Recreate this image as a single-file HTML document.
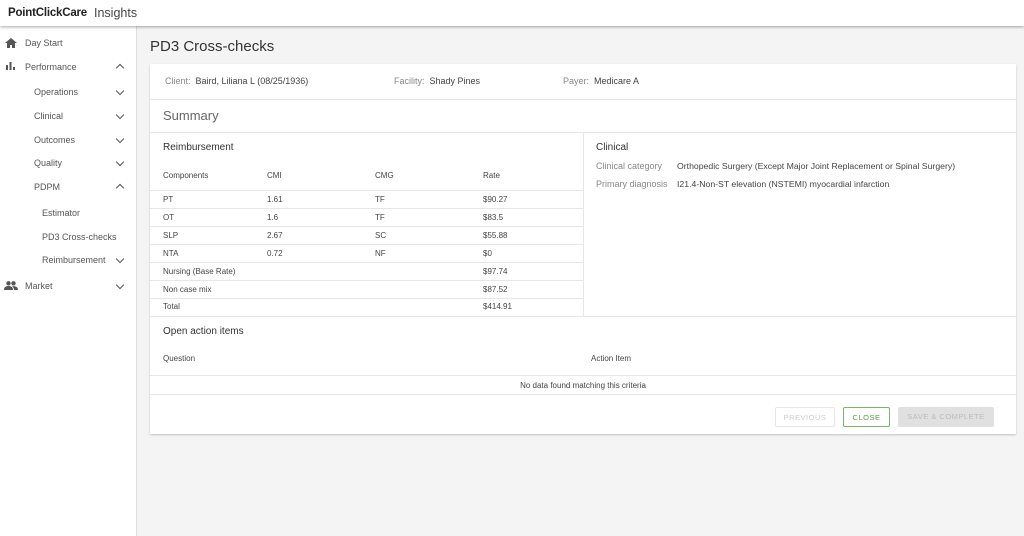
<!DOCTYPE html>
<html><head><meta charset="utf-8"><style>
*{box-sizing:border-box;margin:0;padding:0}
body{width:1024px;height:536px;overflow:hidden;background:#f4f4f4;font-family:"Liberation Sans",sans-serif;color:#333;position:relative}
.hdr{position:absolute;left:0;top:0;width:1024px;height:26px;background:#fff;box-shadow:0 1px 3px rgba(0,0,0,.35);z-index:2}
.hdr b{position:absolute;left:8px;top:7px;font-size:11.5px;color:#222;letter-spacing:-.2px}
.hdr span{position:absolute;left:94px;top:6px;font-size:12.5px;color:#444}
.side{position:absolute;left:0;top:26px;width:137px;height:510px;background:#fff;border-right:1px solid #ddd}
.it{position:absolute;font-size:9px;color:#555}
.ch{position:absolute;left:117px;width:6px;height:6px;border-right:1.4px solid #555;border-bottom:1.4px solid #555;transform:rotate(45deg)}
.up{transform:rotate(-135deg)}
.t{position:absolute;font-size:9px;color:#444}
.card{position:absolute;left:150px;top:64px;width:866px;height:370px;background:#fff;box-shadow:0 1px 2px rgba(0,0,0,.2)}
.hl{position:absolute;left:0;height:1px;background:#e6e6e6}
.g{color:#888}
.btn{position:absolute;top:343px;height:20px;font-size:7.5px;letter-spacing:.5px;text-align:center;line-height:19px;border-radius:2px}
</style></head><body>
<div class="hdr"><b>PointClickCare</b><span>Insights</span></div>
<div class="side">
<svg style="position:absolute;left:5px;top:12px" width="12" height="10" viewBox="0 0 12 10"><path d="M6 0L0 5h2v5h3V7h2v3h3V5h2z" fill="#555"/></svg>
<div class="it" style="left:25px;top:12px">Day Start</div>
<svg style="position:absolute;left:6px;top:36px" width="9" height="8"><rect x="0" y="3" width="2" height="5" fill="#555"/><rect x="3.5" y="0" width="2" height="8" fill="#555"/><rect x="7" y="5" width="2" height="3" fill="#555"/></svg>
<div class="it" style="left:25px;top:36px">Performance</div><div class="ch up" style="top:39px"></div>
<div class="it" style="left:34px;top:61px">Operations</div><div class="ch" style="top:62px"></div>
<div class="it" style="left:34px;top:85px">Clinical</div><div class="ch" style="top:86px"></div>
<div class="it" style="left:34px;top:109px">Outcomes</div><div class="ch" style="top:110px"></div>
<div class="it" style="left:34px;top:132px">Quality</div><div class="ch" style="top:133px"></div>
<div class="it" style="left:34px;top:156px">PDPM</div><div class="ch up" style="top:159px"></div>
<div class="it" style="left:42px;top:182px">Estimator</div>
<div class="it" style="left:42px;top:206px">PD3 Cross-checks</div>
<div class="it" style="left:42px;top:229px">Reimbursement</div><div class="ch" style="top:230px"></div>
<svg style="position:absolute;left:4px;top:255px" width="14" height="9" viewBox="0 0 14 9"><circle cx="4.5" cy="2.3" r="2.2" fill="#555"/><circle cx="9.5" cy="2.3" r="2.2" fill="#555"/><path d="M0 9c0-3 2-4 4.5-4S9 6 9 9zM8 5.3c3-.5 6 .5 6 3.7h-4c0-1.5-.7-2.8-2-3.7z" fill="#555"/></svg>
<div class="it" style="left:25px;top:255px">Market</div><div class="ch" style="top:256px"></div>
</div>
<div style="position:absolute;left:150px;top:38px;font-size:15px;color:#333">PD3 Cross-checks</div>
<div class="card">
<div class="t" style="left:15px;top:12px"><span class="g">Client:</span>&nbsp; Baird, Liliana L (08/25/1936)</div>
<div class="t" style="left:244px;top:12px"><span class="g">Facility:</span>&nbsp; Shady Pines</div>
<div class="t" style="left:413px;top:12px"><span class="g">Payer:</span>&nbsp; Medicare A</div>
<div class="hl" style="top:35px;width:866px"></div>
<div style="position:absolute;left:13px;top:44px;font-size:13px;color:#666">Summary</div>
<div class="hl" style="top:68px;width:866px"></div>
<div style="position:absolute;left:433px;top:69px;width:1px;height:183px;background:#e6e6e6"></div>
<div class="t" style="left:13px;top:78px;font-size:10px;color:#333">Reimbursement</div>
<div class="t" style="left:13px;top:107px;font-size:8px">Components</div><div class="t" style="left:117px;top:107px;font-size:8px">CMI</div><div class="t" style="left:225px;top:107px;font-size:8px">CMG</div><div class="t" style="left:333px;top:107px;font-size:8px">Rate</div>
<div class="hl" style="top:126px;width:433px"></div>
<div class="t" style="left:13px;top:131px;font-size:8px">PT</div><div class="t" style="left:117px;top:131px;font-size:8px">1.61</div><div class="t" style="left:225px;top:131px;font-size:8px">TF</div><div class="t" style="left:333px;top:131px;font-size:8px">$90.27</div>
<div class="hl" style="top:144px;width:433px"></div>
<div class="t" style="left:13px;top:149px;font-size:8px">OT</div><div class="t" style="left:117px;top:149px;font-size:8px">1.6</div><div class="t" style="left:225px;top:149px;font-size:8px">TF</div><div class="t" style="left:333px;top:149px;font-size:8px">$83.5</div>
<div class="hl" style="top:162px;width:433px"></div>
<div class="t" style="left:13px;top:167px;font-size:8px">SLP</div><div class="t" style="left:117px;top:167px;font-size:8px">2.67</div><div class="t" style="left:225px;top:167px;font-size:8px">SC</div><div class="t" style="left:333px;top:167px;font-size:8px">$55.88</div>
<div class="hl" style="top:180px;width:433px"></div>
<div class="t" style="left:13px;top:185px;font-size:8px">NTA</div><div class="t" style="left:117px;top:185px;font-size:8px">0.72</div><div class="t" style="left:225px;top:185px;font-size:8px">NF</div><div class="t" style="left:333px;top:185px;font-size:8px">$0</div>
<div class="hl" style="top:198px;width:433px"></div>
<div class="t" style="left:13px;top:203px;font-size:8px">Nursing (Base Rate)</div><div class="t" style="left:333px;top:203px;font-size:8px">$97.74</div>
<div class="hl" style="top:216px;width:433px"></div>
<div class="t" style="left:13px;top:221px;font-size:8px">Non case mix</div><div class="t" style="left:333px;top:221px;font-size:8px">$87.52</div>
<div class="hl" style="top:234px;width:433px"></div>
<div class="t" style="left:13px;top:238px;font-size:8px">Total</div><div class="t" style="left:333px;top:238px;font-size:8px">$414.91</div>
<div class="t" style="left:446px;top:78px;font-size:10px;color:#333">Clinical</div>
<div class="t" style="left:446px;top:97px"><span class="g">Clinical category</span></div><div class="t" style="left:527px;top:97px;font-size:8.7px">Orthopedic Surgery (Except Major Joint Replacement or Spinal Surgery)</div>
<div class="t" style="left:446px;top:115px"><span class="g">Primary diagnosis</span></div><div class="t" style="left:527px;top:115px;font-size:8.7px">I21.4-Non-ST elevation (NSTEMI) myocardial infarction</div>
<div class="hl" style="top:252px;width:866px"></div>
<div class="t" style="left:13px;top:262px;font-size:10px;color:#333">Open action items</div>
<div class="t" style="left:13px;top:290px;font-size:8px">Question</div><div class="t" style="left:441px;top:290px;font-size:8px">Action Item</div>
<div class="hl" style="top:311px;width:866px"></div>
<div class="t" style="left:0;width:866px;text-align:center;top:317px;font-size:8px">No data found matching this criteria</div>
<div class="hl" style="top:330px;width:866px"></div>
<div class="btn" style="left:625px;width:60px;border:1px solid #e6e6e6;color:#ccc">PREVIOUS</div>
<div class="btn" style="left:693px;width:47px;border:1px solid #7cb26a;color:#5a9a48">CLOSE</div>
<div class="btn" style="left:748px;width:96px;background:#e0e0e0;color:#bbb;line-height:20px">SAVE &amp; COMPLETE</div>
</div>
</body></html>
